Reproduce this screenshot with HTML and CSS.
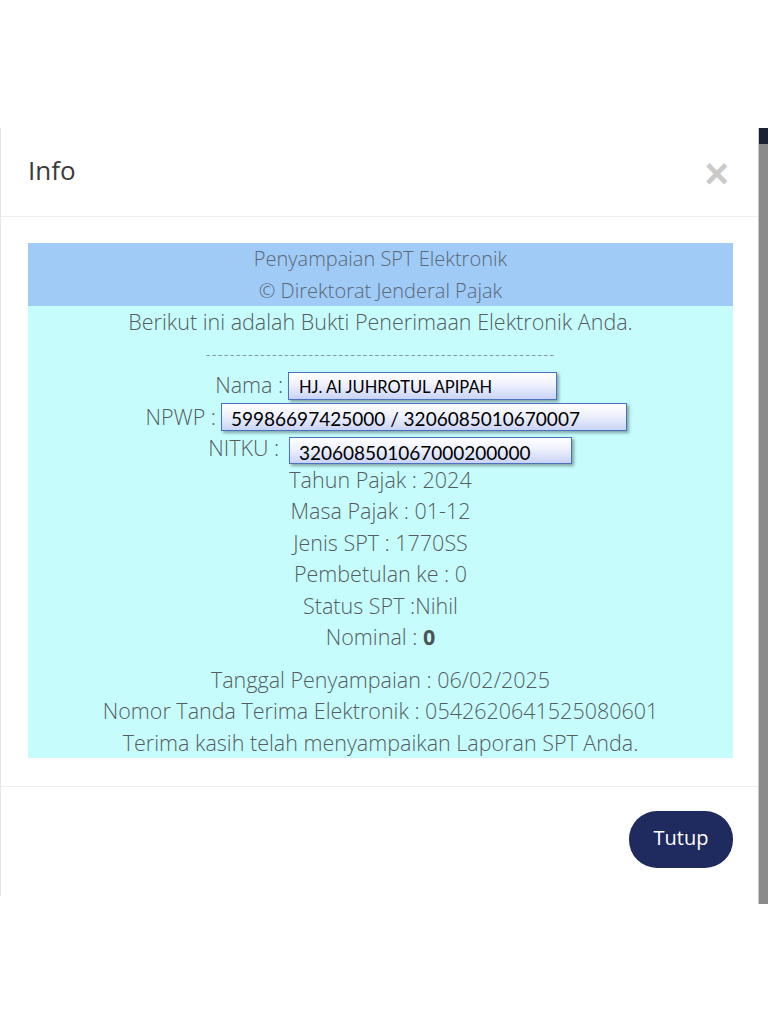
FILE: index.html
```html
<!DOCTYPE html>
<html lang="id">
<head>
<meta charset="utf-8">
<title>Info</title>
<link rel="stylesheet" href="styles.css">
</head>
<body>
<div class="top-space"></div>
<div class="stage">
  <div class="modal">
    <div class="modal-header">
      <h4 class="modal-title">Info</h4>
      <span class="close">&times;</span>
    </div>
    <div class="modal-body">
      <div class="receipt">
        <div class="receipt-head">
          <div class="line">Penyampaian SPT Elektronik</div>
          <div class="line">&copy; Direktorat Jenderal Pajak</div>
        </div>
        <div class="receipt-main">
          <div class="line">Berikut ini adalah Bukti Penerimaan Elektronik Anda.</div>
          <div class="line dashes">----------------------------------------------------------</div>
          <div class="line">Nama : <span class="hole hole-nama"></span></div>
          <div class="line">NPWP : <span class="hole hole-npwp"></span></div>
          <div class="line">NITKU : <span class="hole hole-nitku"></span></div>
          <div class="line">Tahun Pajak : 2024</div>
          <div class="line">Masa Pajak : 01-12</div>
          <div class="line">Jenis SPT : 1770SS</div>
          <div class="line">Pembetulan ke : 0</div>
          <div class="line">Status SPT :Nihil</div>
          <div class="line">Nominal : <b>0</b></div>
        </div>
        <div class="receipt-foot">
          <div class="line">Tanggal Penyampaian : 06/02/2025</div>
          <div class="line">Nomor Tanda Terima Elektronik : 0542620641525080601</div>
          <div class="line">Terima kasih telah menyampaikan Laporan SPT Anda.</div>
        </div>
        <div class="sticker sticker-nama">HJ. AI JUHROTUL APIPAH</div>
        <div class="sticker sticker-npwp">59986697425000 / 3206085010670007</div>
        <div class="sticker sticker-nitku">320608501067000200000</div>
      </div>
    </div>
    <div class="modal-footer">
      <button class="btn-close">Tutup</button>
    </div>
  </div>
  <div class="scrollbar"><div class="scroll-top"></div></div>
</div>
</body>
</html>
```

FILE: styles.css
```css
html, body {
  margin: 0;
  padding: 0;
  background: #ffffff;
}
body {
  font-family: "Open Sans", "Noto Sans", sans-serif;
  width: 768px;
}
.top-space {
  height: 128px;
}
.stage {
  display: flex;
  align-items: flex-start;
}
.modal {
  width: 757px;
  border-left: 1px solid #e6e6e6;
  background: #fff;
  display: flex;
  flex-direction: column;
}
.modal-header {
  height: 88px;
  border-bottom: 1px solid #eeeeee;
  display: flex;
  align-items: center;
  justify-content: space-between;
  padding: 0 29px 0 27px;
}
.modal-title {
  margin: 0;
  font-size: 26px;
  font-weight: 400;
  color: #3a3a3a;
  padding-bottom: 4px;
}
.close {
  font-family: "Liberation Sans", Arial, sans-serif;
  font-weight: 700;
  font-size: 42px;
  color: #cacaca;
  line-height: 1;
  padding-top: 4px;
}
.modal-body {
  padding: 26px 25px 28px 27px;
  border-bottom: 1px solid #eeeeee;
}
.receipt {
  position: relative;
  text-align: center;
  font-weight: 300;
  font-size: 21.5px;
  color: #555d60;
}
.line {
  line-height: 31.5px;
  height: 31.5px;
  white-space: nowrap;
}
.receipt-head {
  background: #9fcbf6;
  color: #5a6878;
  font-size: 20px;
}
.receipt-main,
.receipt-foot {
  background: #c6fcfc;
}
.receipt-foot {
  padding-top: 11px;
}
.receipt b {
  font-weight: 700;
  color: #4b5355;
}
.dashes {
  color: #6f7779;
  font-size: 15px;
  letter-spacing: 1.2px;
}
.hole {
  display: inline-block;
  height: 10px;
}
.hole-nama { width: 257px; }
.hole-npwp { width: 394px; }
.hole-nitku { width: 268px; }
.sticker {
  position: absolute;
  box-sizing: border-box;
  border: 1px solid #4a72c0;
  background: linear-gradient(#ffffff, #eef1fd 45%, #c9d3f6);
  box-shadow: 2px 2px 3px rgba(0, 0, 0, 0.35);
  font-family: Lato, "Liberation Sans", sans-serif;
  font-weight: 400;
  color: #000;
  text-align: left;
  white-space: nowrap;
  display: flex;
  align-items: center;
}
.sticker-nama {
  left: 260px;
  top: 129px;
  width: 269px;
  height: 28px;
  font-size: 16.5px;
  padding: 2px 0 0 10px;
}
.sticker-npwp {
  left: 193px;
  top: 160px;
  width: 406px;
  height: 28px;
  font-size: 19px;
  padding: 2px 0 0 9px;
}
.sticker-nitku {
  left: 261px;
  top: 194px;
  width: 283px;
  height: 27px;
  font-size: 19px;
  padding: 4px 0 0 9px;
}
.modal-footer {
  display: flex;
  justify-content: flex-end;
  padding: 24px 25px 28px 0;
}
.btn-close {
  width: 104px;
  height: 57px;
  border: none;
  border-radius: 28px;
  background: #1f2a5e;
  color: #ffffff;
  font-family: "Open Sans", sans-serif;
  font-size: 20px;
  font-weight: 400;
  padding: 0 0 4px 0;
}
.scrollbar {
  width: 10px;
  height: 776px;
  background: #8a8a8a;
  border-left: 1px solid #c8c8c8;
  box-sizing: border-box;
}
.scroll-top {
  height: 16px;
  background: #1b2233;
}
```
